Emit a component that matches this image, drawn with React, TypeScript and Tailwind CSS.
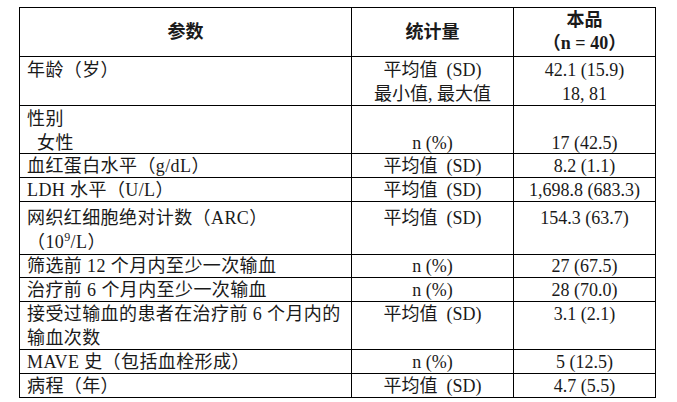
import React from "react";

const font = "font-['Liberation_Serif','Noto_Sans_CJK_SC',serif]";

type Row = {
  param: React.ReactNode;
  stat: React.ReactNode;
  value: React.ReactNode;
  box: string;
};

const mean = "平均值\u00a0 (SD)";

const rows: Row[] = [
  {
    param: "年龄（岁）",
    stat: (
      <>
        {mean}
        <br />
        最小值, 最大值
      </>
    ),
    value: (
      <>
        42.1 (15.9)
        <br />
        18, 81
      </>
    ),
    box: "h-[48px] pt-[2px] leading-[23.5px]",
  },
  {
    param: (
      <>
        性别
        <br />
        <span className="pl-[10px]">女性</span>
      </>
    ),
    stat: (
      <>
        <br />n (%)
      </>
    ),
    value: (
      <>
        <br />
        17 (42.5)
      </>
    ),
    box: "h-[47px] pt-px leading-[24px]",
  },
  { param: "血红蛋白水平（g/dL）", stat: mean, value: "8.2 (1.1)", box: "h-[23px] pt-px leading-[22px]" },
  { param: "LDH 水平（U/L）", stat: mean, value: "1,698.8 (683.3)", box: "h-[23px] pt-px leading-[22px]" },
  {
    param: (
      <>
        网织红细胞绝对计数（ARC）
        <br />
        （10<sup className="text-[12px] top-[-0.6em]">9</sup>/L）
      </>
    ),
    stat: mean,
    value: "154.3 (63.7)",
    box: "h-[52px] pt-[4px] leading-[24px]",
  },
  { param: "筛选前 12 个月内至少一次输血", stat: "n (%)", value: "27 (67.5)", box: "h-[22px] pt-0 leading-[22px]" },
  { param: "治疗前 6 个月内至少一次输血", stat: "n (%)", value: "28 (70.0)", box: "h-[23px] pt-px leading-[22px]" },
  {
    param: (
      <>
        接受过输血的患者在治疗前 6 个月内的
        <br />
        输血次数
      </>
    ),
    stat: mean,
    value: "3.1 (2.1)",
    box: "h-[47px] pt-0 leading-[24px]",
  },
  { param: "MAVE 史（包括血栓形成）", stat: "n (%)", value: "5 (12.5)", box: "h-[23px] pt-px leading-[22px]" },
  { param: "病程（年）", stat: mean, value: "4.7 (5.5)", box: "h-[23px] pt-px leading-[22px]" },
];

const cell = "border border-black align-top p-0";

export default function App() {
  return (
    <div className={`w-[677px] h-[402px] bg-white pl-[19px] pt-[7px] text-[18px] text-[#1a1a1a] ${font}`}>
      <table className="w-[636px] table-fixed border-collapse">
        <colgroup>
          <col className="w-[332px]" />
          <col className="w-[162px]" />
          <col className="w-[142px]" />
        </colgroup>
        <thead>
          <tr>
            <th className="border border-black p-0 font-bold">
              <div className="h-[48px] flex items-center justify-center">参数</div>
            </th>
            <th className="border border-black p-0 font-bold">
              <div className="h-[48px] flex items-center justify-center">统计量</div>
            </th>
            <th className="border border-black p-0 font-bold">
              <div className="h-[48px] pt-px leading-[23px]">
                本品
                <br />（n = 40）
              </div>
            </th>
          </tr>
        </thead>
        <tbody>
          {rows.map((r, i) => (
            <tr key={i}>
              <td className={cell}>
                <div className={`${r.box} pl-[7px] tracking-[0.4px]`}>{r.param}</div>
              </td>
              <td className={cell}>
                <div className={`${r.box} text-center`}>{r.stat}</div>
              </td>
              <td className={cell}>
                <div className={`${r.box} text-center`}>{r.value}</div>
              </td>
            </tr>
          ))}
        </tbody>
      </table>
    </div>
  );
}
